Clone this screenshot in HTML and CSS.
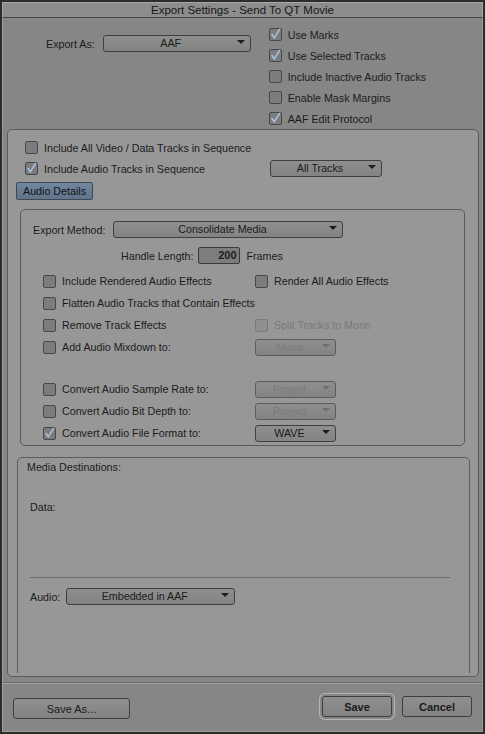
FILE: index.html
```html
<!DOCTYPE html>
<html lang="en">
<head>
  <meta charset="UTF-8">
  <meta name="viewport" content="width=device-width, initial-scale=1.0">
  <title>Export Settings - Send To QT Movie</title>
  <link rel="stylesheet" href="styles.css">
</head>
<body>

  <div class="window">
    <div class="titlebar">Export Settings - Send To QT Movie</div>

    <div class="content">
      <div class="top">
        <div class="export-as">
          <span>Export As:</span>
          <div class="dropdown w-export">AAF</div>
        </div>
        <div class="options">
          <label class="check"><span class="box on"></span>Use Marks</label>
          <label class="check"><span class="box on"></span>Use Selected Tracks</label>
          <label class="check"><span class="box"></span>Include Inactive Audio Tracks</label>
          <label class="check"><span class="box"></span>Enable Mask Margins</label>
          <label class="check"><span class="box on"></span>AAF Edit Protocol</label>
        </div>
      </div>

      <div class="panel">
        <div class="scroll">
          <div class="row">
            <label class="check"><span class="box"></span>Include All Video / Data Tracks in Sequence</label>
          </div>
          <div class="row">
            <label class="check col-wide"><span class="box on"></span>Include Audio Tracks in Sequence</label>
            <div class="dropdown w-tracks">All Tracks</div>
          </div>
          <button class="tab-btn">Audio Details</button>

          <div class="group audio">
            <div class="method">
              <span>Export Method:</span>
              <div class="dropdown w-method">Consolidate Media</div>
            </div>
            <div class="handle">
              <span>Handle Length:</span>
              <div class="number">200</div>
              <span>Frames</span>
            </div>

            <div class="arow">
              <label class="check col"><span class="box"></span>Include Rendered Audio Effects</label>
              <label class="check"><span class="box"></span>Render All Audio Effects</label>
            </div>
            <div class="arow">
              <label class="check col"><span class="box"></span>Flatten Audio Tracks that Contain Effects</label>
            </div>
            <div class="arow">
              <label class="check col"><span class="box"></span>Remove Track Effects</label>
              <label class="check disabled"><span class="box"></span>Split Tracks to Mono</label>
            </div>
            <div class="arow">
              <label class="check col"><span class="box"></span>Add Audio Mixdown to:</label>
              <div class="dropdown small disabled">Mono</div>
            </div>

            <div class="arow spaced">
              <label class="check col"><span class="box"></span>Convert Audio Sample Rate to:</label>
              <div class="dropdown small disabled">Project</div>
            </div>
            <div class="arow">
              <label class="check col"><span class="box"></span>Convert Audio Bit Depth to:</label>
              <div class="dropdown small disabled">Project</div>
            </div>
            <div class="arow">
              <label class="check col"><span class="box on"></span>Convert Audio File Format to:</label>
              <div class="dropdown small">WAVE</div>
            </div>
          </div>

          <div class="group media">
            <div class="media-title">Media Destinations:</div>
            <div class="dest data">Data:</div>
            <div class="divider"></div>
            <div class="dest audio-dest">
              <span>Audio:</span>
              <div class="dropdown w-embed">Embedded in AAF</div>
            </div>
          </div>
        </div>
      </div>

      <div class="footer">
        <button class="btn save-as">Save As...</button>
        <button class="btn bold focused">Save</button>
        <button class="btn bold">Cancel</button>
      </div>
    </div>
  </div>

  <script>
    // check marks
    const tick = '<svg width="13" height="13" viewBox="0 0 13 13"><path d="M3 6.5 L5.3 9.8 L10.5 1.5" fill="none" stroke="#a9c1dd" stroke-width="1.6" stroke-linecap="round" stroke-linejoin="round"/></svg>';
    document.querySelectorAll('.box.on').forEach(b => {
      b.innerHTML = tick;
    });
  </script>

</body>
</html>
```

FILE: styles.css
```css
body {
  margin: 0;
  background-color: #2c2c2c;
  font-family: "Liberation Sans", Arial, sans-serif;
  font-size: 10.7px;
  color: #1b1b1b;
}

.window {
  width: 485px;
  height: 734px;
  box-sizing: border-box;
  border: 2px solid #2c2c2c;
  background-color: #868686;
  display: flex;
  flex-direction: column;
}

.titlebar {
  height: 16px;
  box-sizing: border-box;
  line-height: 14px;
  text-align: center;
  font-size: 11.5px;
  background-color: #8d8d8d;
  border-top: 1px solid #a8a8a8;
  border-left: 1px solid #a8a8a8;
  border-right: 1px solid #a8a8a8;
  border-bottom: 1px solid #474747;
  color: #161616;
}

.content {
  flex: 1;
  display: flex;
  flex-direction: column;
  border-left: 1px solid #9d9d9d;
  border-right: 1px solid #9d9d9d;
  border-bottom: 1px solid #9d9d9d;
}

/* top area */
.top {
  height: 111px;
  display: flex;
  align-items: flex-start;
}

.export-as {
  display: flex;
  align-items: center;
  gap: 8px;
  margin-left: 43px;
  margin-top: 17px;
}

.options {
  margin-left: 18px;
  padding-top: 6px;
}

.options .check {
  height: 21px;
}

/* checkbox */
.check {
  display: flex;
  align-items: center;
  gap: 6px;
  white-space: nowrap;
}

.box {
  width: 13px;
  height: 13px;
  box-sizing: border-box;
  border: 1px solid #474747;
  border-radius: 2px;
  background-color: #7c7c7c;
  position: relative;
  flex: none;
}

.box svg {
  position: absolute;
  left: -1px;
  top: -1px;
}

.check.disabled {
  color: #7a7a7a;
}

.check.disabled .box {
  border-color: #7a7a7a;
  background-color: #8f8f8f;
}

/* dropdowns */
.dropdown {
  height: 17px;
  box-sizing: border-box;
  border: 1px solid #3f3f3f;
  border-radius: 3px;
  background: linear-gradient(#8e8e8e, #838383);
  text-align: center;
  line-height: 15px;
  padding-right: 12px;
  position: relative;
  white-space: nowrap;
}

.dropdown::after {
  content: "";
  position: absolute;
  right: 5px;
  top: 4px;
  border-left: 4px solid transparent;
  border-right: 4px solid transparent;
  border-top: 4px solid #1c1c1c;
}

.dropdown.disabled {
  color: #7b7b7b;
  border-color: #5c5c5c;
}

.dropdown.disabled::after {
  border-top-color: #6e6e6e;
}

.w-export { width: 148px; }
.w-tracks { width: 112px; }
.w-method { width: 230px; }
.w-embed { width: 169px; }
.small { width: 81px; }

/* main panel */
.panel {
  height: 548px;
  box-sizing: border-box;
  margin: 0 3px 0 4px;
  border: 1px solid #5b5b5b;
  border-radius: 5px;
  background-color: #979797;
  padding-bottom: 3px;
}

.scroll {
  height: 543px;
  overflow: hidden;
  padding-top: 7px;
  box-sizing: border-box;
}

.row {
  display: flex;
  align-items: center;
  height: 21px;
  padding-left: 17px;
}

.col-wide {
  width: 245px;
}

.tab-btn {
  display: block;
  margin: 3px 0 0 8px;
  width: 77px;
  height: 18px;
  padding: 0;
  border: 1px solid #3d4756;
  border-radius: 2px;
  background: linear-gradient(#7186a0, #62748b);
  font-family: inherit;
  font-size: 10.7px;
  color: #121212;
}

.group {
  border: 1px solid #5b5b5b;
  border-radius: 5px;
}

.audio {
  margin: 9px 13px 0 12px;
  padding: 11px 0 1px 12px;
}

.method {
  display: flex;
  align-items: center;
  gap: 6px;
}

.method .dropdown {
  margin-left: 2px;
}

.handle {
  display: flex;
  align-items: center;
  margin: 9px 0 0 88px;
  height: 17px;
}

.number {
  width: 42px;
  height: 17px;
  box-sizing: border-box;
  margin: 0 7px 0 4px;
  border: 1px solid #3a3a3a;
  border-radius: 2px;
  background-color: #7d7d7d;
  text-align: right;
  padding-right: 2px;
  line-height: 15px;
  font-weight: bold;
  font-size: 11px;
}

.arow {
  display: flex;
  align-items: center;
  height: 22px;
  padding-left: 10px;
}

.handle + .arow {
  margin-top: 6px;
}

.arow.spaced {
  margin-top: 20px;
}

.arow .col {
  width: 212px;
}

.media {
  height: 240px;
  margin: 11px 8px 0 9px;
  padding: 2px 0 0 9px;
}

.media-title {
  line-height: 14px;
}

.dest {
  margin-left: 3px;
}

.data {
  margin-top: 26px;
  line-height: 14px;
}

.divider {
  width: 420px;
  margin: 63px 0 0 3px;
  border-top: 1px solid #6a6a6a;
}

.audio-dest {
  display: flex;
  align-items: center;
  gap: 6px;
  margin-top: 10px;
}

/* footer */
.footer {
  flex: 1;
  display: flex;
  align-items: flex-start;
  margin-top: 5px;
  padding: 13px 10px 0 10px;
  border-top: 1px solid #6e6e6e;
  box-shadow: inset 0 1px #9e9e9e;
}

.btn {
  height: 21px;
  width: 70px;
  padding: 0;
  border: 1px solid #3d3d3d;
  border-radius: 3px;
  background: linear-gradient(#8f8f8f, #838383);
  font-family: inherit;
  font-size: 11px;
  color: #1b1b1b;
}

.btn.bold {
  font-weight: bold;
}

.save-as {
  width: 117px;
  margin-top: 2px;
  margin-right: auto;
}

.focused {
  margin-right: 10px;
  box-shadow: 0 0 0 2px #868686, 0 0 0 3px #b4b4b4;
}
```
